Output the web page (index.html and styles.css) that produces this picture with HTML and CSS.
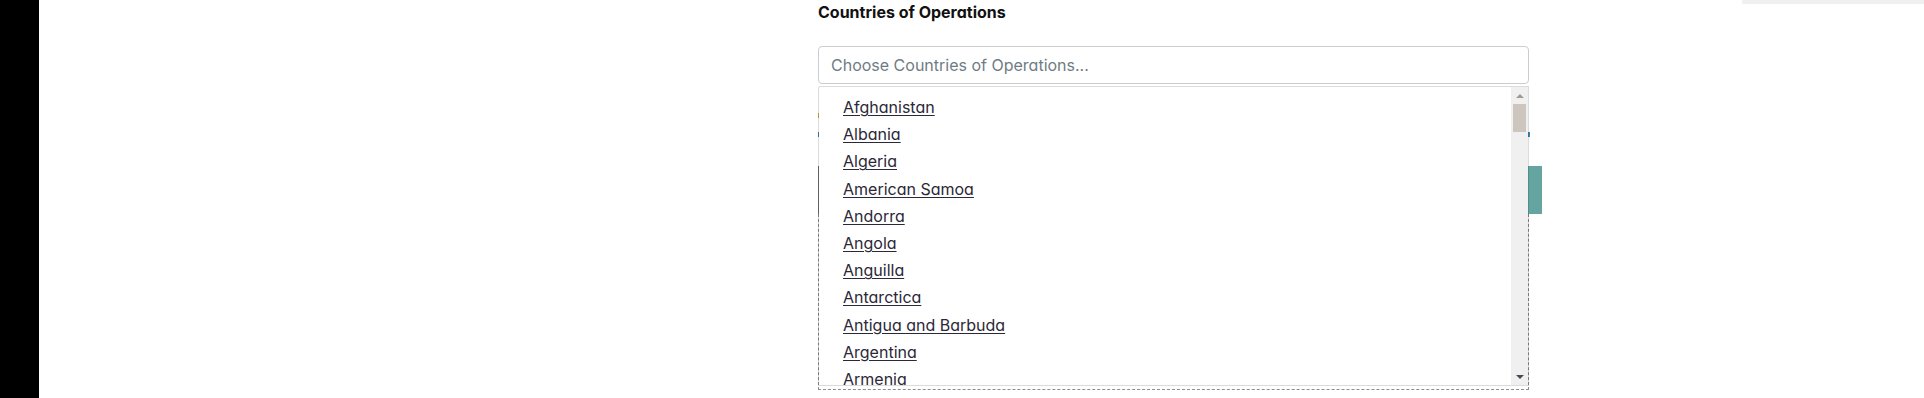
FILE: index.html
```html
<!DOCTYPE html>
<html lang="en">
<head>
<meta charset="utf-8">
<title>Countries of Operations</title>
<link rel="stylesheet" href="styles.css">
</head>
<body>
<div class="page">
  <aside class="sidebar"></aside>
  <main class="main">
    <section class="form">
      <h3 class="label">Countries of Operations</h3>
      <div class="field">
        <div class="select-input">Choose Countries of Operations...</div>
        <div class="behind-orange"></div>
        <div class="behind-blue"></div>
        <div class="behind-button"></div>
        <div class="dashed-box"></div>
        <div class="dropdown">
          <ul class="options">
            <li><a href="#">Afghanistan</a></li>
            <li><a href="#">Albania</a></li>
            <li><a href="#">Algeria</a></li>
            <li><a href="#">American Samoa</a></li>
            <li><a href="#">Andorra</a></li>
            <li><a href="#">Angola</a></li>
            <li><a href="#">Anguilla</a></li>
            <li><a href="#">Antarctica</a></li>
            <li><a href="#">Antigua and Barbuda</a></li>
            <li><a href="#">Argentina</a></li>
            <li><a href="#">Armenia</a></li>
          </ul>
          <div class="scrollbar">
            <div class="sb-btn"><span class="arrow-up"></span></div>
            <div class="sb-track"><div class="sb-thumb"></div></div>
            <div class="sb-btn"><span class="arrow-down"></span></div>
          </div>
        </div>
      </div>
    </section>
    <div class="top-strip"></div>
  </main>
</div>
</body>
</html>
```
FILE: styles.css
```css
html, body {
  margin: 0;
  padding: 0;
  background: #ffffff;
}

body {
  font-family: "Inter", "Lato", sans-serif;
  font-feature-settings: "cv11" 1;
  color: #2b2838;
}

.page {
  display: flex;
  height: 398px;
  overflow: hidden;
}

.sidebar {
  width: 39px;
  flex: none;
  background: #000000;
}

.main {
  flex: 1;
  display: flex;
  align-items: flex-start;
}

.form {
  margin-left: 779px;
  width: 711px;
  flex: none;
}

.label {
  margin: 0;
  padding-top: 2px;
  font-size: 16px;
  line-height: 20px;
  font-weight: 700;
  color: #111111;
}

.field {
  position: relative;
  margin-top: 24px;
}

.select-input {
  box-sizing: border-box;
  height: 38px;
  border: 1px solid #c9cdd1;
  border-radius: 4px;
  padding: 0 12px;
  font-size: 16px;
  line-height: 36px;
  color: #6f7c84;
}

.behind-orange {
  margin-top: 29px;
  height: 5px;
  border-left: 1px solid #e7a14a;
}

.behind-blue {
  margin-top: 14px;
  height: 5px;
  width: 712px;
  background: #3a88a6;
}

.behind-button {
  margin-top: 29px;
  height: 48px;
  width: 724px;
  box-sizing: border-box;
  background: #64a5a1;
  border-left: 1px solid #707070;
}

.dashed-box {
  box-sizing: border-box;
  height: 176px;
  border: 1px dashed #8d8d8d;
  border-top: none;
}

.dropdown {
  position: absolute;
  left: 0;
  top: 40px;
  box-sizing: border-box;
  width: 711px;
  height: 300px;
  display: flex;
  background: #ffffff;
  background-clip: padding-box;
  border: 1px solid rgba(0, 0, 0, 0.14);
  border-top-left-radius: 3px;
  z-index: 2;
}

.options {
  flex: 1;
  margin: 0;
  padding: 7px 0 0 24px;
  list-style: none;
  overflow: hidden;
}

.options li {
  font-size: 16px;
  line-height: 27.2px;
  white-space: nowrap;
}

.options a {
  color: #2b2838;
  text-decoration: underline;
  text-underline-offset: 2px;
  text-decoration-thickness: 1px;
}

.scrollbar {
  width: 17px;
  flex: none;
  background: #f0f0f0;
  display: flex;
  flex-direction: column;
}

.sb-btn {
  height: 17px;
  flex: none;
  display: flex;
  align-items: center;
  justify-content: center;
}

.sb-track {
  flex: 1;
  padding: 0 2px;
}

.sb-thumb {
  height: 28px;
  background: #cdc6be;
}

.arrow-up {
  width: 0;
  height: 0;
  border-left: 4px solid transparent;
  border-right: 4px solid transparent;
  border-bottom: 4px solid #a39a95;
}

.arrow-down {
  width: 0;
  height: 0;
  border-left: 4px solid transparent;
  border-right: 4px solid transparent;
  border-top: 4px solid #4f4658;
}

.top-strip {
  margin-left: auto;
  width: 182px;
  height: 4px;
  background: #f0f0f0;
  flex: none;
}
```
